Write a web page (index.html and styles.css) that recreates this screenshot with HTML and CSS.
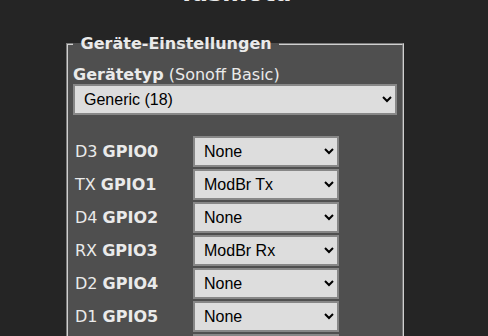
FILE: index.html
```html
<!DOCTYPE html>
<html lang="de">
<head>
  <meta charset="UTF-8">
  <title>Tasmota - Geräte-Einstellungen</title>
  <meta name="viewport" content="width=device-width, initial-scale=1.0">
  <link rel="stylesheet" href="styles.css">
</head>
<body>

  <div class="page">
    <h2 class="title">Tasmota</h2>

    <fieldset>
      <legend>&nbsp;Geräte-Einstellungen&nbsp;</legend>
      <div class="devtype"><b>Gerätetyp</b> (Sonoff Basic)</div>
      <select class="sel-wide">
        <option>Generic (18)</option>
        <option>Sonoff Basic (1)</option>
      </select>

      <table class="gpio">
        <tr><td class="lbl">D3 <b>GPIO0</b></td><td class="val"><select><option>None</option></select></td></tr>
        <tr><td class="lbl">TX <b>GPIO1</b></td><td class="val"><select><option>ModBr Tx</option></select></td></tr>
        <tr><td class="lbl">D4 <b>GPIO2</b></td><td class="val"><select><option>None</option></select></td></tr>
        <tr><td class="lbl">RX <b>GPIO3</b></td><td class="val"><select><option>ModBr Rx</option></select></td></tr>
        <tr><td class="lbl">D2 <b>GPIO4</b></td><td class="val"><select><option>None</option></select></td></tr>
        <tr><td class="lbl">D1 <b>GPIO5</b></td><td class="val"><select><option>None</option></select></td></tr>
        <tr><td class="lbl">SD2 <b>GPIO9</b></td><td class="val"><select><option>None</option></select></td></tr>
        <tr><td class="lbl">SD3 <b>GPIO10</b></td><td class="val"><select><option>None</option></select></td></tr>
      </table>
    </fieldset>
  </div>

</body>
</html>
```

FILE: styles.css
```css
html {
  overflow: hidden;
}

body {
  margin: 0;
  background: #252525;
  color: #eaeaea;
  font-family: "DejaVu Sans", Verdana, sans-serif;
  font-size: 16px;
}

.page {
  width: 338px;
  margin-left: 66px;
}

.title {
  margin: -21px 0 27px;
  font-size: 24px;
  line-height: 28px;
  text-align: center;
}

fieldset {
  margin: 0;
  padding: 5px;
  background: #4f4f4f;
  border: 2px groove #d0d0d0;
}

legend {
  padding: 0 2px;
  font-weight: bold;
  line-height: 19px;
}

.devtype {
  margin-top: 8px;
  line-height: 18px;
}

select {
  box-sizing: border-box;
  height: 31px;
  width: 100%;
  padding: 0 5px;
  background: #dddddd;
  color: #000;
  border: 2px solid #878787;
  border-radius: 0;
  font-family: "Liberation Sans", Arial, sans-serif;
  font-size: 16px;
}

.gpio {
  margin-top: 19px;
  border-collapse: separate;
  border-spacing: 2px;
}

.gpio td {
  padding: 0;
}

.lbl {
  width: 116px;
}

.val {
  width: 146px;
}
```
